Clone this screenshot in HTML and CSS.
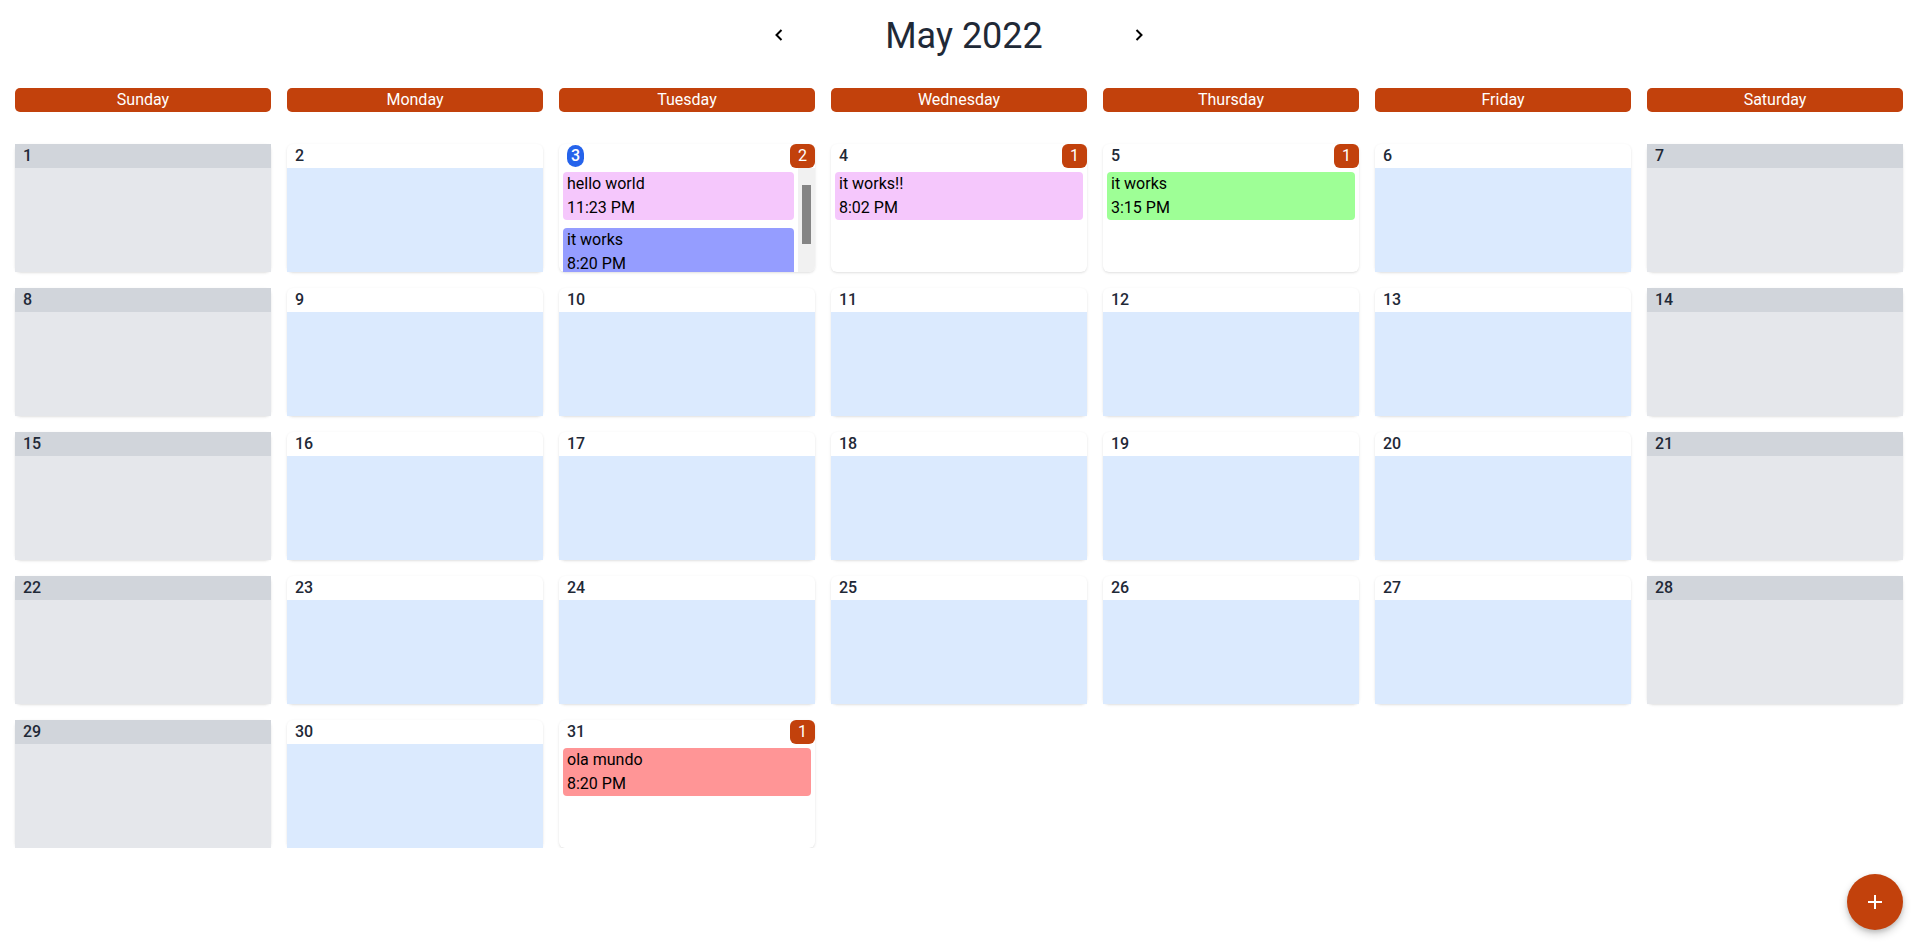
FILE: index.html
```html
<!DOCTYPE html>
<html lang="en">
<head>
<meta charset="utf-8">
<title>Calendar</title>
<link rel="stylesheet" href="styles.css">
</head>
<body>
<div class="topbar">
  <button class="nav-btn nav-prev" aria-label="Previous month">
    <svg width="8" height="12" viewBox="0 0 8 12"><path d="M6.5 1 L1.5 6 L6.5 11" fill="none" stroke="#000" stroke-width="2"/></svg>
  </button>
  <h1 class="title">May 2022</h1>
  <button class="nav-btn nav-next" aria-label="Next month">
    <svg width="8" height="12" viewBox="0 0 8 12"><path d="M1.5 1 L6.5 6 L1.5 11" fill="none" stroke="#000" stroke-width="2"/></svg>
  </button>
</div>

<div class="weekdays">
  <div class="weekday">Sunday</div>
  <div class="weekday">Monday</div>
  <div class="weekday">Tuesday</div>
  <div class="weekday">Wednesday</div>
  <div class="weekday">Thursday</div>
  <div class="weekday">Friday</div>
  <div class="weekday">Saturday</div>
</div>

<div class="month">
  <!-- week 1 -->
  <div class="day day--weekend"><div class="day-head"><span class="day-num">1</span></div><div class="day-body"></div></div>
  <div class="day"><div class="day-head"><span class="day-num">2</span></div><div class="day-body"></div></div>
  <div class="day day--events">
    <div class="day-head"><span class="day-num day-num--today">3</span><span class="count">2</span></div>
    <div class="events-scroll">
      <div class="events events--clipped">
        <div class="event ev-pink"><div>hello world</div><div>11:23 PM</div></div>
        <div class="event ev-blue"><div>it works</div><div>8:20 PM</div></div>
      </div>
      <div class="scrollbar"><div class="scrollbar-thumb"></div></div>
    </div>
  </div>
  <div class="day day--events">
    <div class="day-head"><span class="day-num">4</span><span class="count">1</span></div>
    <div class="events">
      <div class="event ev-pink"><div>it works!!</div><div>8:02 PM</div></div>
    </div>
  </div>
  <div class="day day--events">
    <div class="day-head"><span class="day-num">5</span><span class="count">1</span></div>
    <div class="events">
      <div class="event ev-green"><div>it works</div><div>3:15 PM</div></div>
    </div>
  </div>
  <div class="day"><div class="day-head"><span class="day-num">6</span></div><div class="day-body"></div></div>
  <div class="day day--weekend"><div class="day-head"><span class="day-num">7</span></div><div class="day-body"></div></div>

  <!-- week 2 -->
  <div class="day day--weekend"><div class="day-head"><span class="day-num">8</span></div><div class="day-body"></div></div>
  <div class="day"><div class="day-head"><span class="day-num">9</span></div><div class="day-body"></div></div>
  <div class="day"><div class="day-head"><span class="day-num">10</span></div><div class="day-body"></div></div>
  <div class="day"><div class="day-head"><span class="day-num">11</span></div><div class="day-body"></div></div>
  <div class="day"><div class="day-head"><span class="day-num">12</span></div><div class="day-body"></div></div>
  <div class="day"><div class="day-head"><span class="day-num">13</span></div><div class="day-body"></div></div>
  <div class="day day--weekend"><div class="day-head"><span class="day-num">14</span></div><div class="day-body"></div></div>

  <!-- week 3 -->
  <div class="day day--weekend"><div class="day-head"><span class="day-num">15</span></div><div class="day-body"></div></div>
  <div class="day"><div class="day-head"><span class="day-num">16</span></div><div class="day-body"></div></div>
  <div class="day"><div class="day-head"><span class="day-num">17</span></div><div class="day-body"></div></div>
  <div class="day"><div class="day-head"><span class="day-num">18</span></div><div class="day-body"></div></div>
  <div class="day"><div class="day-head"><span class="day-num">19</span></div><div class="day-body"></div></div>
  <div class="day"><div class="day-head"><span class="day-num">20</span></div><div class="day-body"></div></div>
  <div class="day day--weekend"><div class="day-head"><span class="day-num">21</span></div><div class="day-body"></div></div>

  <!-- week 4 -->
  <div class="day day--weekend"><div class="day-head"><span class="day-num">22</span></div><div class="day-body"></div></div>
  <div class="day"><div class="day-head"><span class="day-num">23</span></div><div class="day-body"></div></div>
  <div class="day"><div class="day-head"><span class="day-num">24</span></div><div class="day-body"></div></div>
  <div class="day"><div class="day-head"><span class="day-num">25</span></div><div class="day-body"></div></div>
  <div class="day"><div class="day-head"><span class="day-num">26</span></div><div class="day-body"></div></div>
  <div class="day"><div class="day-head"><span class="day-num">27</span></div><div class="day-body"></div></div>
  <div class="day day--weekend"><div class="day-head"><span class="day-num">28</span></div><div class="day-body"></div></div>

  <!-- week 5 -->
  <div class="day day--weekend"><div class="day-head"><span class="day-num">29</span></div><div class="day-body"></div></div>
  <div class="day"><div class="day-head"><span class="day-num">30</span></div><div class="day-body"></div></div>
  <div class="day day--events">
    <div class="day-head"><span class="day-num">31</span><span class="count">1</span></div>
    <div class="events">
      <div class="event ev-red"><div>ola mundo</div><div>8:20 PM</div></div>
    </div>
  </div>
</div>

<button class="fab" aria-label="Add event">
  <svg width="14" height="14" viewBox="0 0 14 14"><path d="M7 0 V14 M0 7 H14" stroke="#fff" stroke-width="2"/></svg>
</button>
</body>
</html>
```

FILE: styles.css
```css
* { box-sizing: border-box; }

body {
  margin: 0;
  font-family: Roboto, "Liberation Sans", sans-serif;
  font-size: 16px;
  background: #fff;
  color: #1f2937;
}

.topbar {
  display: flex;
  justify-content: center;
  align-items: center;
  height: 40px;
  margin-top: 16px;
  padding-left: 2px;
}

.nav-btn {
  width: 24px;
  height: 24px;
  margin-bottom: 2px;
  padding: 0;
  border: 0;
  background: transparent;
  display: flex;
  align-items: center;
  justify-content: center;
  cursor: pointer;
}

.title {
  margin: 0 84px 0 94px;
  font-size: 36px;
  line-height: 40px;
  font-weight: 400;
  color: #1f2937;
}

.weekdays,
.month {
  display: grid;
  grid-template-columns: repeat(7, 256px);
  column-gap: 16px;
  margin-left: 15px;
}

.weekdays { margin-top: 32px; }

.weekday {
  height: 24px;
  line-height: 24px;
  text-align: center;
  color: #fff;
  background: #c2410c;
  border-radius: 5px;
}

.month {
  margin-top: 32px;
  grid-auto-rows: 128px;
  row-gap: 16px;
}

.day {
  display: flex;
  flex-direction: column;
  background: #fff;
  border-radius: 6px;
  box-shadow: 0 1px 3px 0 rgba(0, 0, 0, 0.1), 0 1px 2px -1px rgba(0, 0, 0, 0.1);
  min-height: 0;
}

.day-head {
  flex: 0 0 24px;
  display: flex;
  justify-content: space-between;
  align-items: flex-start;
  padding-left: 8px;
}

.day-num {
  line-height: 24px;
  font-weight: 500;
  color: #1f2937;
}

.day-num--today {
  margin-top: 1px;
  padding: 0 4px;
  line-height: 22px;
  color: #fff;
  background: #2563eb;
  border-radius: 9999px;
}

.count {
  padding: 0 8px;
  line-height: 24px;
  color: #fff;
  background: #c2410c;
  border-radius: 6px;
}

.day-body {
  flex: 1;
  background: #dbeafe;
}

.day--weekend .day-head { background: #d1d5db; }
.day--weekend .day-body { background: #e5e7eb; }

.events {
  flex: 1;
  min-height: 0;
  display: flex;
  flex-direction: column;
  gap: 8px;
  padding: 4px;
}

.events-scroll {
  flex: 1;
  min-height: 0;
  display: flex;
}

.events--clipped {
  overflow: hidden;
}

.scrollbar {
  flex: 0 0 17px;
  padding: 17px 4px 0;
  background: #f1f1f1;
  border-bottom-right-radius: 6px;
}

.scrollbar-thumb {
  height: 59px;
  background: #858585;
}

.event {
  flex: 0 0 auto;
  padding: 0 4px;
  line-height: 24px;
  color: #000;
  border-radius: 4px;
}

.ev-pink  { background: #f5c7fc; }
.ev-blue  { background: #959dff; }
.ev-green { background: #9eff96; }
.ev-red   { background: #ff9596; }

.fab {
  position: fixed;
  right: 13px;
  bottom: 14px;
  width: 56px;
  height: 56px;
  padding: 0;
  border: 0;
  border-radius: 50%;
  background: #c2410c;
  box-shadow: 0 4px 8px rgba(0, 0, 0, 0.2), 0 2px 4px rgba(0, 0, 0, 0.12);
  display: flex;
  align-items: center;
  justify-content: center;
  cursor: pointer;
}
```
